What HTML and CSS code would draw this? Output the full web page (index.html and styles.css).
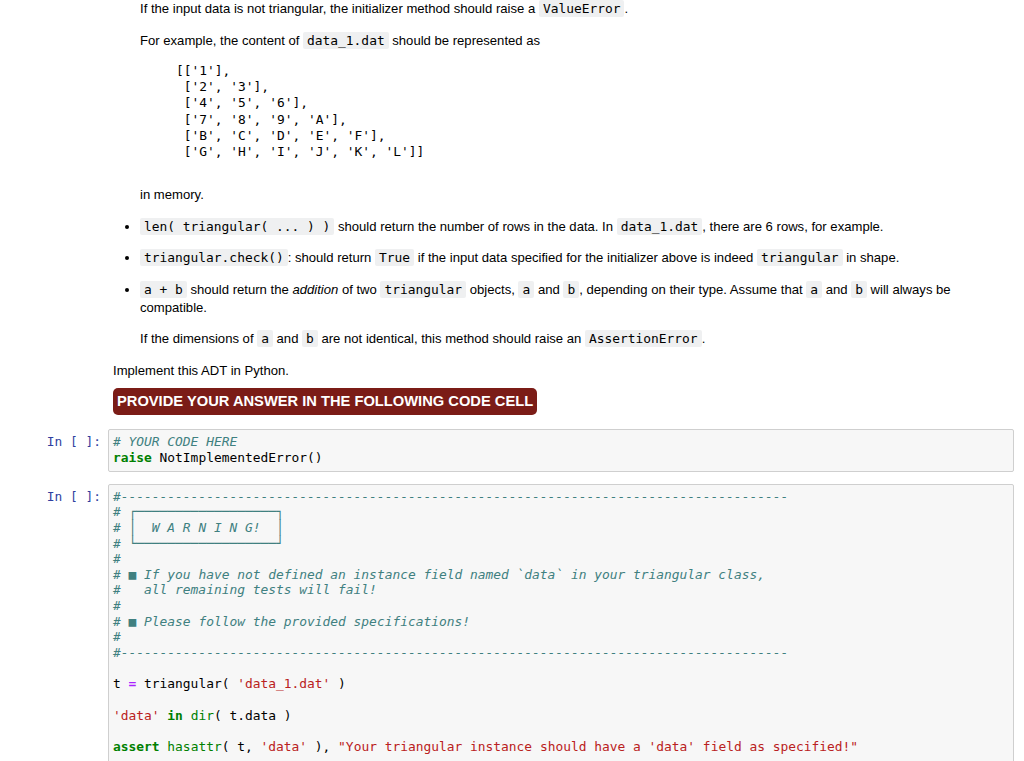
FILE: index.html
```
<!DOCTYPE html>
<html lang="en">
<head>
<meta charset="utf-8">
<title>triangular ADT</title>
<link rel="stylesheet" href="styles.css">
</head>
<body>
<div class="nb">
  <div class="row">
    <div class="prompt-col"></div>
    <div class="md">
      <ul class="list">
        <li class="cont">
          <p class="para">If the input data is not triangular, the initializer method should raise a <code>ValueError</code>.</p>
          <p class="para">For example, the content of <code>data_1.dat</code> should be represented as</p>
          <pre class="data">[['1'],
 ['2', '3'],
 ['4', '5', '6'],
 ['7', '8', '9', 'A'],
 ['B', 'C', 'D', 'E', 'F'],
 ['G', 'H', 'I', 'J', 'K', 'L']]</pre>
          <p class="para">in memory.</p>
        </li>
        <li><p class="para"><code>len( triangular( ... ) )</code> should return the number of rows in the data. In <code>data_1.dat</code>, there are 6 rows, for example.</p></li>
        <li><p class="para"><code>triangular.check()</code>: should return <code>True</code> if the input data specified for the initializer above is indeed <code>triangular</code> in shape.</p></li>
        <li>
          <p class="para"><code>a + b</code> <span>should return the</span> <em>addition</em> <span>of two</span> <code>triangular</code> <span>objects,</span> <code>a</code> <span>and</span> <code>b</code><span>, depending on their type. Assume that</span> <code>a</code> <span>and</span> <code>b</code> <span>will always be</span> <span>compatible.</span></p>
          <p class="para">If the dimensions of <code>a</code> and <code>b</code> are not identical, this method should raise an <code>AssertionError</code>.</p>
        </li>
      </ul>
      <p class="para">Implement this ADT in Python.</p>
      <div class="banner">PROVIDE YOUR ANSWER IN THE FOLLOWING CODE CELL</div>
    </div>
  </div>

  <div class="row cell-row">
    <div class="prompt-col"><span class="prompt">In [ ]:</span></div>
    <pre class="cell"><span class="c"># YOUR CODE HERE</span>
<span class="k">raise</span> NotImplementedError()</pre>
  </div>

  <div class="row cell-row">
    <div class="prompt-col"><span class="prompt">In [ ]:</span></div>
    <pre class="cell"><span class="c">#--------------------------------------------------------------------------------------</span>
<span class="c"># <span class="box">┌──────────────────┐</span></span>
<span class="c"># <span class="box">│</span>  W A R N I N G!  <span class="box">│</span></span>
<span class="c"># <span class="box">└──────────────────┘</span></span>
<span class="c">#</span>
<span class="c"># <span class="sq">■</span> If you have not defined an instance field named `data` in your triangular class,</span>
<span class="c">#   all remaining tests will fail!</span>
<span class="c">#</span>
<span class="c"># <span class="sq">■</span> Please follow the provided specifications!</span>
<span class="c">#</span>
<span class="c">#--------------------------------------------------------------------------------------</span>

t <span class="o">=</span> triangular( <span class="s">'data_1.dat'</span> )

<span class="s">'data'</span> <span class="k">in</span> <span class="b">dir</span>( t.data )

<span class="k">assert</span> <span class="b">hasattr</span>( t, <span class="s">'data'</span> ), <span class="s">"Your triangular instance should have a 'data' field as specified!"</span>

</pre>
  </div>
</div>
</body>
</html>
```
FILE: styles.css
```
html, body {
  margin: 0;
  padding: 0;
  background: #ffffff;
  overflow: hidden;
}

body {
  font-family: "Liberation Sans", Arial, sans-serif;
  font-size: 13.1px;
  color: #000000;
}

.nb {
  display: flex;
  flex-direction: column;
  padding-right: 10px;
}

.row {
  display: grid;
  grid-template-columns: 108px 1fr;
}

.cell-row {
  margin-top: 14px;
}

.cell-row + .cell-row {
  margin-top: 12px;
}

.prompt-col {
  text-align: right;
  padding-right: 7px;
  padding-top: 5px;
}

.prompt {
  font-family: "DejaVu Sans Mono", monospace;
  font-size: 12.9px;
  line-height: 15.66px;
  color: #303f9f;
}

.md {
  padding-left: 5px;
  padding-right: 20px;
}

.para {
  margin: 0 0 13.5px;
  line-height: 18px;
}

.list {
  margin: 0;
  padding-left: 27px;
}

.list li.cont {
  list-style: none;
}

code {
  font-family: "DejaVu Sans Mono", monospace;
  font-size: 12.9px;
  line-height: 15px;
  background: #eff0f1;
  padding: 1px 4px;
  border-radius: 2px;
}

em {
  font-style: italic;
}

.data {
  font-family: "DejaVu Sans Mono", monospace;
  font-size: 12.9px;
  line-height: 16.2px;
  margin: 0 0 26px 36px;
  padding: 0;
}

.banner {
  display: inline-block;
  margin-top: -5px;
  background: #7b1c17;
  color: #ffffff;
  font-weight: bold;
  font-size: 14.7px;
  line-height: 17px;
  padding: 5px 4px;
  border-radius: 5px;
}

.cell {
  margin: 0;
  background: #f7f7f7;
  border: 1px solid #cfcfcf;
  border-radius: 2px;
  padding: 4px 4px 5px;
  font-family: "DejaVu Sans Mono", monospace;
  font-size: 12.9px;
  line-height: 15.66px;
  color: #000000;
  white-space: pre;
  overflow: hidden;
}

.c {
  color: #408080;
  font-style: italic;
}

.box {
  display: inline-block;
  font-style: normal;
  transform: scaleY(1.08);
}

.sq {
  font-style: normal;
}

.k {
  color: #008000;
  font-weight: bold;
}

.b {
  color: #008000;
}

.s {
  color: #ba2121;
}

.o {
  color: #aa22ff;
  font-weight: bold;
}
```
